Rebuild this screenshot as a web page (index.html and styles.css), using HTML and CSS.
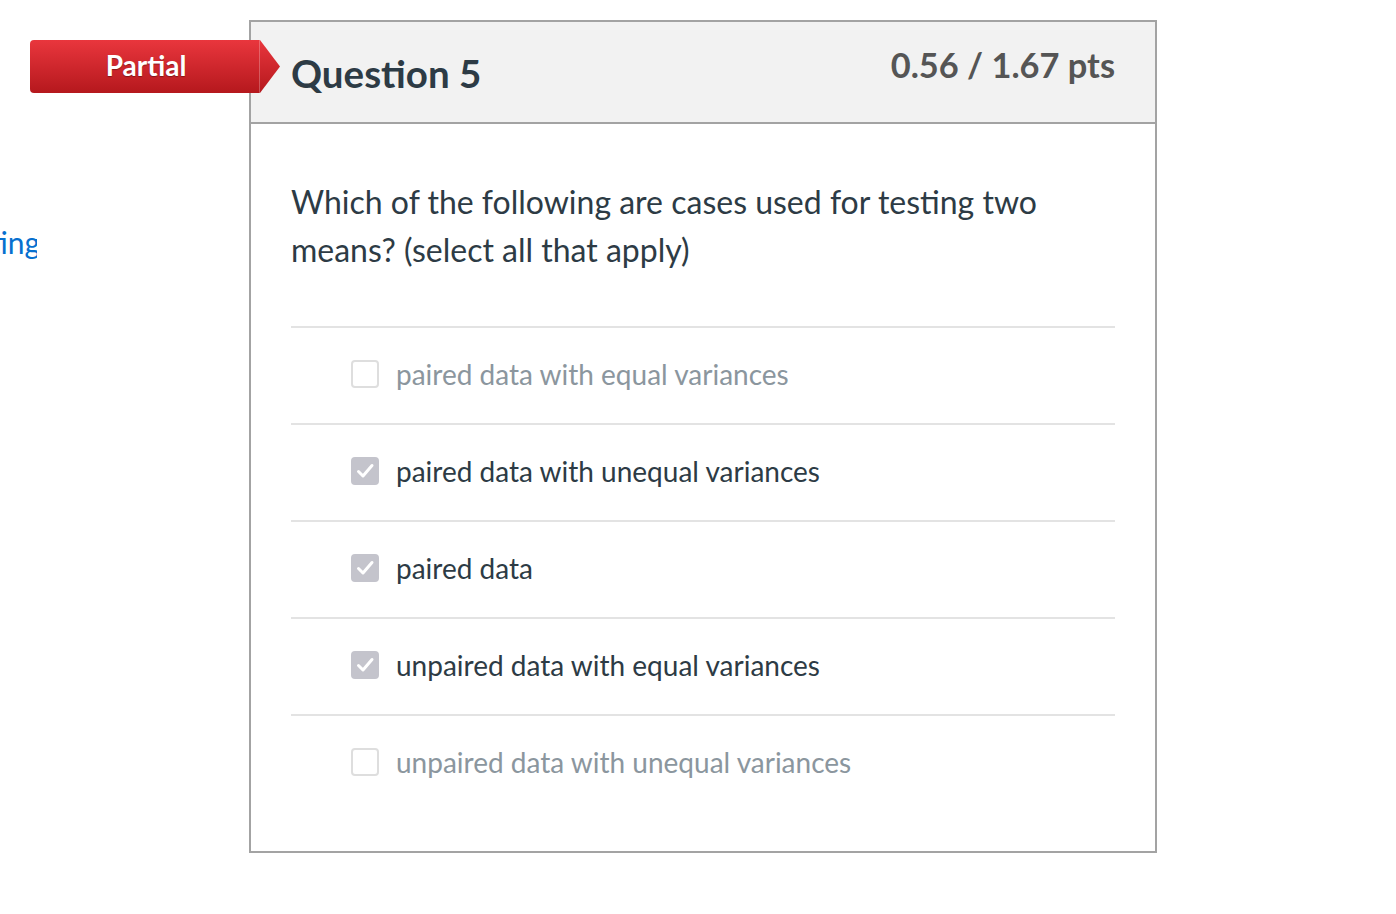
FILE: index.html
```html
<!DOCTYPE html>
<html lang="en">
<head>
    <meta charset="UTF-8">
    <title>Question 5</title>
    <link rel="stylesheet" href="styles.css">
</head>
<body>
    <div class="page">
        <div class="side-nav">
            <a href="#" class="side-link">Hypothesis Testing</a>
        </div>
        <div class="question">
            <div class="badge">Partial</div>
            <div class="question-header">
                <h2 class="question-title">Question 5</h2>
                <div class="question-points">0.56 / 1.67 pts</div>
            </div>
            <div class="question-body">
                <p class="question-text">Which of the following are cases used for testing two means? (select all that apply)</p>
                <div class="answers">
                    <label class="answer">
                        <span class="check"></span>
                        <span class="answer-text">paired data with equal variances</span>
                    </label>
                    <label class="answer selected">
                        <span class="check"><svg viewBox="0 0 28 28" width="28" height="28"><path d="M7.5 14.5l4.5 4.5L21 8.5" fill="none" stroke="#fff" stroke-width="3" stroke-linecap="round" stroke-linejoin="round"/></svg></span>
                        <span class="answer-text">paired data with unequal variances</span>
                    </label>
                    <label class="answer selected">
                        <span class="check"><svg viewBox="0 0 28 28" width="28" height="28"><path d="M7.5 14.5l4.5 4.5L21 8.5" fill="none" stroke="#fff" stroke-width="3" stroke-linecap="round" stroke-linejoin="round"/></svg></span>
                        <span class="answer-text">paired data</span>
                    </label>
                    <label class="answer selected">
                        <span class="check"><svg viewBox="0 0 28 28" width="28" height="28"><path d="M7.5 14.5l4.5 4.5L21 8.5" fill="none" stroke="#fff" stroke-width="3" stroke-linecap="round" stroke-linejoin="round"/></svg></span>
                        <span class="answer-text">unpaired data with equal variances</span>
                    </label>
                    <label class="answer">
                        <span class="check"></span>
                        <span class="answer-text">unpaired data with unequal variances</span>
                    </label>
                </div>
            </div>
        </div>
    </div>
</body>
</html>
```

FILE: styles.css
```css
body {
    font-family: Lato, 'Noto Sans', Arial, sans-serif;
    background: #fff;
    color: #2d3b45;
    margin: 0;
    padding: 0;
}
.page {
    display: flex;
    align-items: flex-start;
    padding-top: 20px;
}
.side-nav {
    width: 37px;
    margin-right: 212px;
    margin-top: 198px;
    display: flex;
    justify-content: flex-end;
    overflow: hidden;
}
.side-link {
    flex: none;
    white-space: nowrap;
    font-size: 30px;
    color: #0770cf;
    text-decoration: none;
    line-height: 48px;
    margin-right: -3px;
}
.question {
    position: relative;
    width: 904px;
    border: 2px solid #a3a3a3;
    background: #fff;
}
.badge {
    position: absolute;
    left: -221px;
    top: 18px;
    width: 250px;
    height: 53px;
    box-sizing: border-box;
    padding: 0 18px 4px 0;
    display: flex;
    align-items: center;
    justify-content: center;
    background: linear-gradient(#e9363d, #b5181d);
    border-radius: 4px 0 0 4px;
    clip-path: polygon(0 0, 230px 0, 100% 50%, 230px 100%, 0 100%);
    color: #fff;
    font-size: 28px;
    font-weight: 700;
    text-shadow: 0 1px 1px rgba(0,0,0,0.35);
}
.badge::after {
    content: "";
    position: absolute;
    left: 229px;
    top: 0;
    bottom: 0;
    width: 1px;
    background: rgba(255,255,255,0.25);
}
.question-header {
    display: flex;
    justify-content: space-between;
    align-items: flex-start;
    height: 102px;
    box-sizing: border-box;
    padding: 22px 40px 0;
    background: #f2f2f2;
    border-bottom: 2px solid #a3a3a3;
}
.question-title {
    margin: 6px 0 0;
    font-size: 38.5px;
    font-weight: 700;
    color: #2d3b45;
}
.question-points {
    font-size: 34.4px;
    font-weight: 700;
    color: #555;
}
.question-body {
    padding: 54px 40px 40px;
}
.question-text {
    margin: 0 0 52px;
    font-size: 32px;
    line-height: 48px;
    padding-right: 60px;
}
.answer {
    display: flex;
    align-items: center;
    height: 95px;
    padding-left: 60px;
    border-top: 2px solid #e3e3e3;
}
.answer .check {
    width: 28px;
    height: 28px;
    box-sizing: border-box;
    border: 2px solid #dedede;
    border-radius: 4px;
    margin-right: 17px;
    margin-top: -4px;
    flex: none;
}
.answer.selected .check {
    border: none;
    background: #c4c4cc;
}
.answer .check svg {
    display: block;
}
.answer-text {
    font-size: 28px;
    color: #8b969e;
    margin-bottom: 4px;
}
.answer.selected .answer-text {
    color: #2d3b45;
}
```
